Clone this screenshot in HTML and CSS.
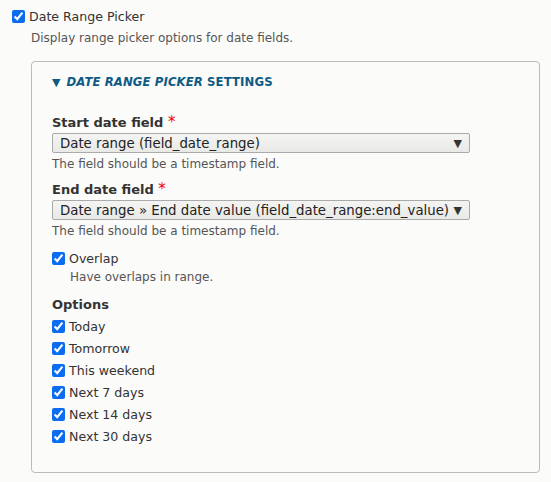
FILE: index.html
```html
<!DOCTYPE html>
<html lang="en">
<head>
    <meta charset="UTF-8">
    <title>Date Range Picker</title>
    <link rel="stylesheet" href="styles.css">
</head>
<body>

<div class="form-item top-item">
    <div class="check-row">
        <input type="checkbox" id="drp" checked>
        <label for="drp">Date Range Picker</label>
    </div>
    <div class="description top-desc">Display range picker options for date fields.</div>
</div>

<div class="settings">
    <div class="legend"><span class="arrow">&#9660;</span><em>DATE RANGE PICKER</em> SETTINGS</div>

    <div class="form-item field">
        <label class="field-label" for="start">Start date field <span class="required">*</span></label>
        <div class="select-wrap">
            <select id="start">
                <option>Date range (field_date_range)</option>
            </select>
            <span class="select-arrow">&#9660;</span>
        </div>
        <div class="description">The field should be a timestamp field.</div>
    </div>

    <div class="form-item field">
        <label class="field-label" for="end">End date field <span class="required">*</span></label>
        <div class="select-wrap">
            <select id="end">
                <option>Date range &raquo; End date value (field_date_range:end_value)</option>
            </select>
            <span class="select-arrow">&#9660;</span>
        </div>
        <div class="description">The field should be a timestamp field.</div>
    </div>

    <div class="form-item overlap">
        <div class="check-row">
            <input type="checkbox" id="overlap" checked>
            <label for="overlap">Overlap</label>
        </div>
        <div class="description indent">Have overlaps in range.</div>
    </div>

    <div class="form-item options">
        <div class="field-label">Options</div>
        <div class="check-row"><input type="checkbox" id="o1" checked><label for="o1">Today</label></div>
        <div class="check-row"><input type="checkbox" id="o2" checked><label for="o2">Tomorrow</label></div>
        <div class="check-row"><input type="checkbox" id="o3" checked><label for="o3">This weekend</label></div>
        <div class="check-row"><input type="checkbox" id="o4" checked><label for="o4">Next 7 days</label></div>
        <div class="check-row"><input type="checkbox" id="o5" checked><label for="o5">Next 14 days</label></div>
        <div class="check-row"><input type="checkbox" id="o6" checked><label for="o6">Next 30 days</label></div>
    </div>
</div>

</body>
</html>
```

FILE: styles.css
```css
body {
    font-family: "DejaVu Sans", Verdana, sans-serif;
    background-color: #fbfbfa;
    color: #333;
    margin: 0;
    padding: 8px 0 0 0;
    font-size: 13px;
}
input[type="checkbox"] {
    width: 13px;
    height: 13px;
    margin: 0;
    accent-color: #0b6cf0;
}
.check-row {
    display: flex;
    align-items: center;
    gap: 4px;
    height: 22px;
}
.check-row label {
    color: #333;
    font-size: 12.6px;
}
.top-item {
    margin-left: 12px;
}
.top-item .check-row {
    height: 16px;
}
.description {
    font-size: 12px;
    color: #555;
    line-height: 16px;
}
.top-desc {
    margin: 6px 0 0 19px;
}
.settings {
    margin: 15px 0 0 31px;
    width: 509px;
    height: 412px;
    border: 1px solid #bbb;
    border-radius: 4px;
    padding: 0 20px;
    box-sizing: border-box;
}
.legend {
    margin-top: 12px;
    line-height: 16px;
    color: #0d5a84;
    font-weight: bold;
    font-size: 11.7px;
    letter-spacing: 0.1px;
}
.legend .arrow {
    font-size: 11px;
    margin-right: 6px;
    font-style: normal;
}
.field {
    margin-top: 23px;
}
.field + .field {
    margin-top: 9px;
}
.field-label {
    display: block;
    font-weight: bold;
    line-height: 16px;
    margin-bottom: 2px;
}
.required {
    color: #e00;
    font-weight: normal;
    font-size: 15px;
}
.select-wrap {
    position: relative;
    width: 418px;
}
select {
    appearance: none;
    display: block;
    width: 100%;
    height: 20px;
    padding: 0 14px 0 7px;
    border: 1px solid #aaa;
    border-radius: 2px;
    background: linear-gradient(#f4f4f2, #e9e9e6);
    font-family: inherit;
    font-size: 13.3px;
    color: #222;
}
.select-arrow {
    position: absolute;
    right: 8px;
    top: 4px;
    font-size: 11px;
    color: #333;
    pointer-events: none;
}
.field .description {
    margin-top: 3px;
}
.overlap {
    margin-top: 8px;
}
.indent {
    margin-left: 18px;
    margin-top: 0;
}
.options {
    margin-top: 12px;
}
.options .field-label {
    margin-bottom: 2px;
}
```
